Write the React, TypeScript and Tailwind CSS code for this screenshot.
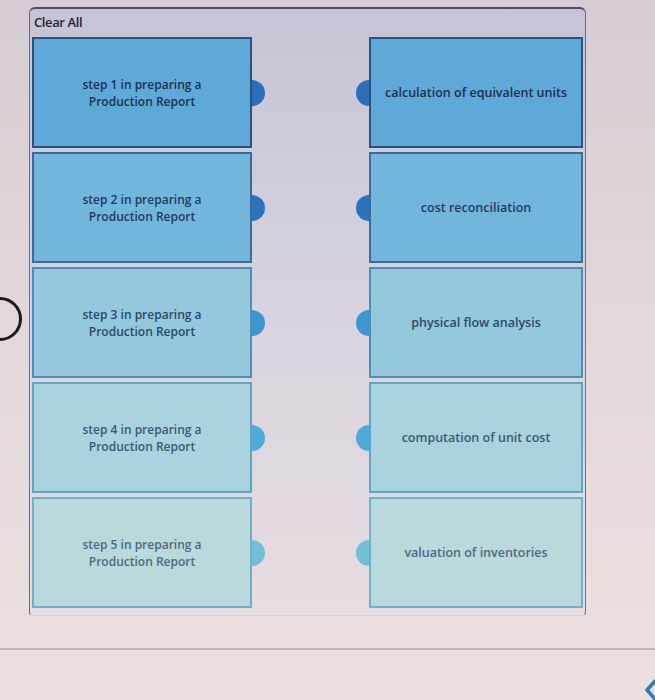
import React from "react"

type Row = {
  left: string
  right: string
  card: string
  text: string
  tab: string
}

// matching pairs, each row a little lighter than the one above it
const rows: Row[] = [
  {
    left: "step 1 in preparing a\nProduction Report",
    right: "calculation of equivalent units",
    card: "bg-[#5ea9d8] border-[#2b5283]",
    text: "text-[#1d2f52]",
    tab: "bg-[#2a6fb8]",
  },
  {
    left: "step 2 in preparing a\nProduction Report",
    right: "cost reconciliation",
    card: "bg-[#72b6dc] border-[#3a6c99]",
    text: "text-[#223a5c]",
    tab: "bg-[#2c73bb]",
  },
  {
    left: "step 3 in preparing a\nProduction Report",
    right: "physical flow analysis",
    card: "bg-[#93c8dd] border-[#4d8db8]",
    text: "text-[#2c4868]",
    tab: "bg-[#3d97cf]",
  },
  {
    left: "step 4 in preparing a\nProduction Report",
    right: "computation of unit cost",
    card: "bg-[#a9d3df] border-[#5fa3c6]",
    text: "text-[#3b5875]",
    tab: "bg-[#4fabd8]",
  },
  {
    left: "step 5 in preparing a\nProduction Report",
    right: "valuation of inventories",
    card: "bg-[#b9d9dc] border-[#6fb1cc]",
    text: "text-[#4c6a82]",
    tab: "bg-[#73bfd8]",
  },
]

function MatchRow({ row }: { row: Row }) {
  return (
    <div className="flex h-[111px] items-stretch">
      <div
        className={`flex w-[220px] items-center justify-center border-2 text-center ${row.card}`}
      >
        <span className={`whitespace-pre-line text-[12px] font-semibold leading-[17px] ${row.text}`}>
          {row.left}
        </span>
      </div>
      <div className="flex flex-1 items-center justify-between">
        <div className={`h-[26px] w-[13px] rounded-r-full ${row.tab}`} />
        <div className={`h-[26px] w-[13px] rounded-l-full ${row.tab}`} />
      </div>
      <div
        className={`flex w-[214px] items-center justify-center border-2 px-2 text-center ${row.card}`}
      >
        <span className={`text-[12.5px] font-semibold leading-[17px] ${row.text}`}>{row.right}</span>
      </div>
    </div>
  )
}

export default function App() {
  return (
    <div
      className="relative h-[700px] w-[655px] overflow-hidden bg-linear-to-b from-[#d6ccd4] via-[#e3d8dc] to-[#ecdfde]"
      style={{ fontFamily: '"Open Sans", "Liberation Sans", sans-serif' }}
    >
      <div className="ml-[29px] w-[557px] pt-[7px]">
        <div className="rounded-t-md rounded-b-sm border-t-2 border-x border-b border-x-[#6a6d88] border-t-[#4a4f70] border-b-[#d6d0d8] bg-linear-to-b from-[#c6c3d6] via-[#d8d3de] to-[#e6dde0] px-[2px] pb-[7px]">
          <div className="flex h-[28px] items-center pl-[2px]">
            <span className="text-[13px] font-semibold tracking-[-0.4px] text-[#1f2235]">Clear All</span>
          </div>
          <div className="flex flex-col gap-[4px]">
            {rows.map((r) => (
              <MatchRow key={r.right} row={r} />
            ))}
          </div>
        </div>
      </div>

      <div className="mt-[32px] h-[2px] w-full bg-[#c2b6bc]" />

      {/* partial circular control at the left edge */}
      <div className="absolute left-[-22px] top-[297px] h-[44px] w-[44px] rounded-full border-[3px] border-[#1b1b1f]" />

      {/* back chevron peeking in bottom right */}
      <svg
        className="absolute bottom-[-2px] right-[-4px]"
        width="16"
        height="24"
        viewBox="0 0 16 24"
        fill="none"
        stroke="#2c7fb6"
        strokeWidth="3.5"
        strokeLinecap="round"
        strokeLinejoin="round"
      >
        <path d="M12 3 L4 12 L12 21" />
      </svg>
    </div>
  )
}
